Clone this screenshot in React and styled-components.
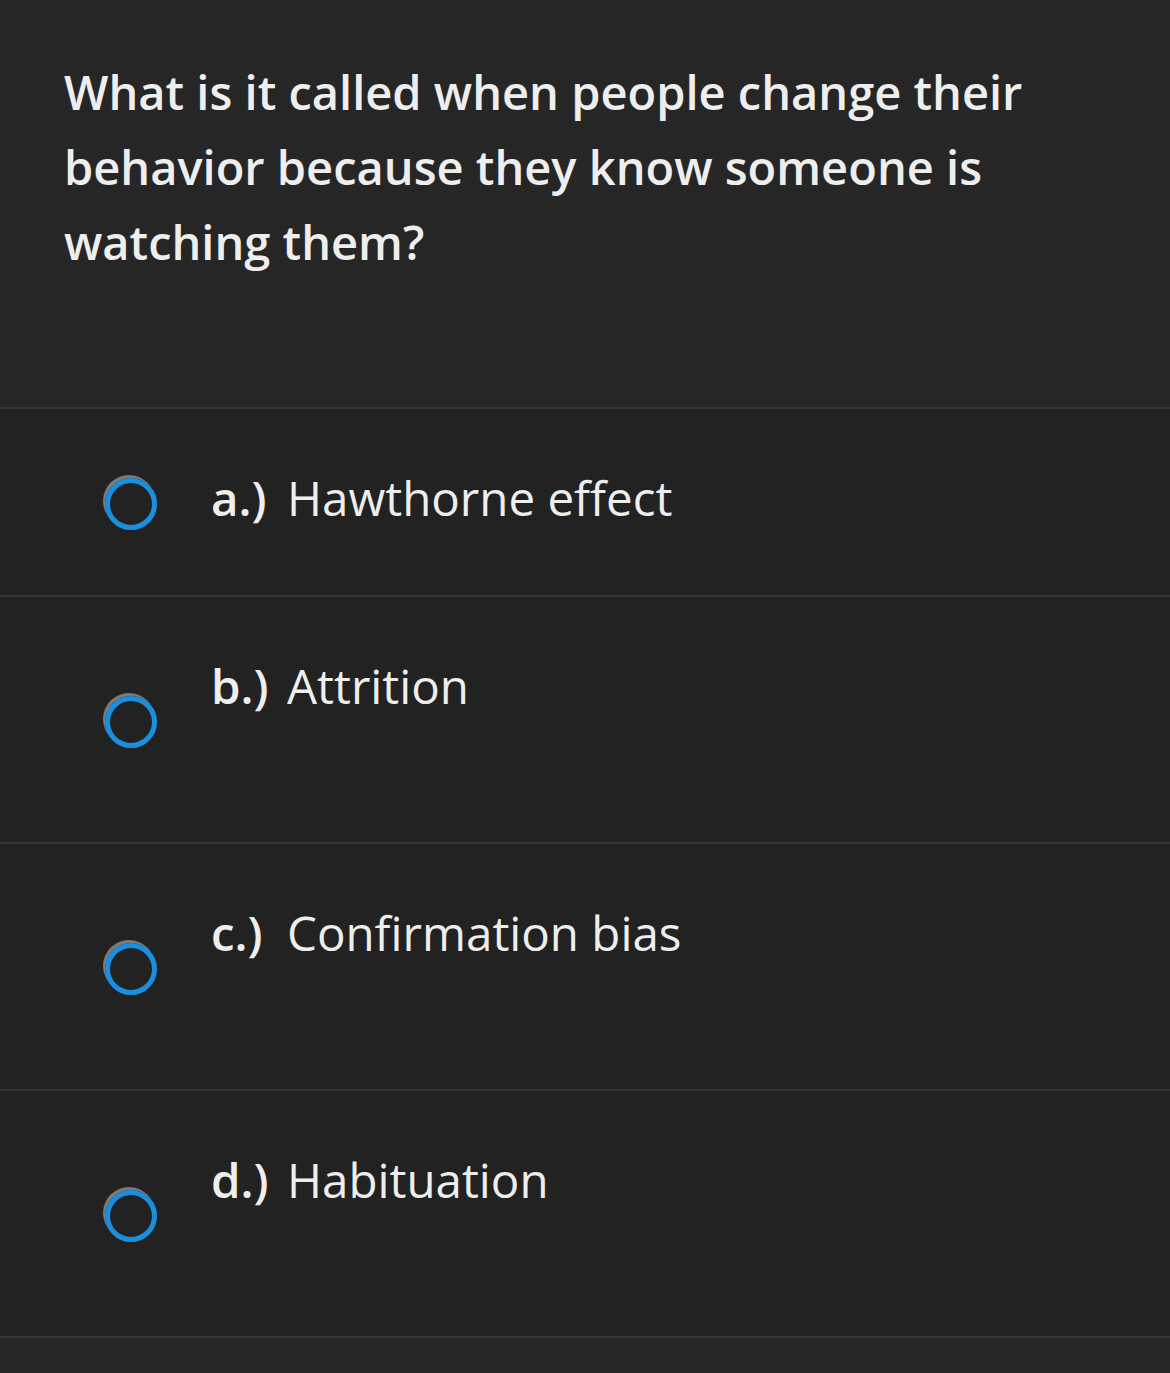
import React from 'react'
import styled, { createGlobalStyle } from 'styled-components'

const GlobalStyle = createGlobalStyle`
  html, body {
    margin: 0;
    padding: 0;
    background: #262626;
  }
  body {
    font-family: "Open Sans", Lato, sans-serif;
    -webkit-font-smoothing: antialiased;
  }
`

const options = [
  { key: 'a.)', text: 'Hawthorne effect', tall: false },
  { key: 'b.)', text: 'Attrition', tall: true },
  { key: 'c.)', text: 'Confirmation bias', tall: true },
  { key: 'd.)', text: 'Habituation', tall: true },
]

export default function App() {
  return (
    <>
      <GlobalStyle />
      <Page>
        <Question>
          What is it called when people change their behavior because they know someone is
          watching them?
        </Question>
        <Options>
          {options.map((o) => (
            <Option key={o.key} $tall={o.tall}>
              <Radio />
              <Label>
                <Letter>{o.key}</Letter>
                <Text>{o.text}</Text>
              </Label>
            </Option>
          ))}
        </Options>
      </Page>
    </>
  )
}

const Page = styled.div`
  width: 1170px;
  min-height: 1373px;
  background: #262626;
`

const Question = styled.div`
  padding: 55px 100px 0 64px;
  height: 409px;
  box-sizing: border-box;
  color: #eeeeee;
  font-size: 47px;
  font-weight: 600;
  line-height: 75px;
  border-bottom: 2px solid #363636;
`

const Options = styled.div`
  background: #222222;
`

const Option = styled.div`
  display: flex;
  align-items: center;
  height: ${(p) => (p.$tall ? '247px' : '188px')};
  box-sizing: border-box;
  border-bottom: 2px solid #363636;
`

const Radio = styled.div`
  flex: none;
  width: 42px;
  height: 42px;
  border-radius: 50%;
  border: 5px solid #1a8fe0;
  margin-left: 105px;
  box-shadow: -2px -3px 0 0 #7a7a7a;
  transform: translateY(2px);
`

const Label = styled.div`
  align-self: flex-start;
  display: flex;
  align-items: baseline;
  margin: 61px 0 0 54px;
  color: #eeeeee;
  font-size: 47.5px;
  line-height: 56px;
`

const Letter = styled.span`
  font-weight: 600;
  width: 76px;
`

const Text = styled.span`
  font-weight: 400;
`
